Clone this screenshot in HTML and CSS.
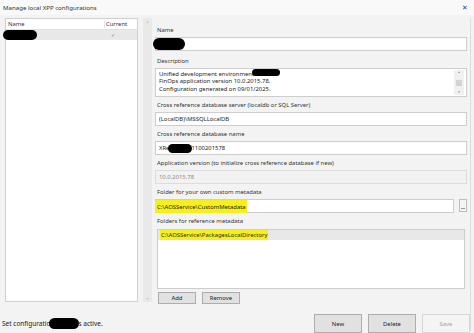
FILE: index.html
```html
<!DOCTYPE html>
<html>
<head>
<meta charset="utf-8">
<link rel="stylesheet" href="styles.css">
</head>
<body>
<div class="window">
  <header class="titlebar">
    <span class="title">Manage local XPP configurations</span>
    <span class="close">✕</span>
  </header>
  <main class="main">
    <section class="configs">
      <div class="configs-head"><span class="col-name">Name</span><span class="col-current">Current</span></div>
      <div class="configs-row selected"><span class="redact r-list"></span><span class="check">✓</span></div>
    </section>
    <div class="splitter"><span class="arrow">▲</span><span class="arrow">▼</span></div>
    <section class="form">
      <div class="lbl l-name">Name</div>
      <div class="input name-input"><span class="redact r-name"></span></div>

      <div class="lbl l-desc">Description</div>
      <div class="textarea">
        <div class="lines">
          <div>Unified development environment<span class="redact r-desc"></span></div>
          <div>FinOps application version 10.0.2015.78.</div>
          <div>Configuration generated on 09/01/2025.</div>
        </div>
        <div class="vbar"><span class="up">▲</span><span class="thumb"></span><span class="down">▼</span></div>
      </div>

      <div class="lbl">Cross reference database server (localdb or SQL Server)</div>
      <div class="input">(LocalDB)\MSSQLLocalDB</div>

      <div class="lbl">Cross reference database name</div>
      <div class="input">XRe<span class="redact r-db"></span>1100201578</div>

      <div class="lbl">Application version (to initialize cross reference database if new)</div>
      <div class="input disabled">10.0.2015.78</div>

      <div class="lbl">Folder for your own custom metadata</div>
      <div class="folder-row">
        <div class="input folder-input"><span class="hl">C:\AOSService\CustomMetadata</span></div>
        <div class="browse"><span></span></div>
      </div>

      <div class="lbl">Folders for reference metadata</div>
      <div class="reflist">
        <div class="ref-row selected"><span class="hl">C:\AOSService\PackagesLocalDirectory</span></div>
      </div>
      <div class="ref-buttons">
        <button class="btn small">Add</button>
        <button class="btn small">Remove</button>
      </div>
    </section>
    <div class="edge"></div>
  </main>
  <footer class="footer">
    <div class="status">Set configuratio<span class="redact r-status"></span>s active.</div>
    <div class="actions">
      <button class="btn">New</button>
      <button class="btn">Delete</button>
      <button class="btn disabled-btn">Save</button>
    </div>
  </footer>
</div>
</body>
</html>
```
FILE: styles.css
```css
* { box-sizing: border-box; }
html, body { margin: 0; padding: 0; }
body {
  width: 474px;
  height: 333px;
  overflow: hidden;
  background: #f3f3f3;
  font-family: "Noto Sans", "Open Sans", sans-serif;
  font-size: 5.9px;
  color: #2b2b2b;
}
.window { width: 474px; height: 333px; display: flex; flex-direction: column; }

.titlebar {
  height: 17px;
  display: flex;
  align-items: center;
  justify-content: space-between;
  padding: 0 6px 1px 3px;
  background: #f9f9f9;
}
.title { font-size: 6.1px; color: #333; }
.close { font-size: 7px; color: #444; }

.main {
  height: 287px;
  margin-top: 3px;
  display: flex;
  padding-left: 5px;
}

.configs {
  width: 133px;
  height: 284px;
  background: #fff;
  border: 1px solid #cfcfcf;
}
.configs-head {
  height: 11px;
  display: flex;
  align-items: center;
  border-bottom: 1px solid #e2e2e2;
  padding-left: 2px;
  color: #333;
}
.col-name { flex: 1; }
.col-current { width: 33px; border-left: 1px solid #e6e6e6; padding-left: 1px; }
.configs-row {
  height: 10px;
  display: flex;
  align-items: center;
  justify-content: space-between;
  position: relative;
}
.configs-row.selected { background: #e8e8e8; }
.check { width: 33px; padding-left: 7px; color: #777; font-size: 5px; }

.redact {
  display: inline-block;
  background: #000;
  border-radius: 6px;
}
.r-list { width: 34px; height: 10px; margin-left: -3px; }

.splitter {
  width: 9px;
  height: 284px;
  margin-left: 5px;
  background: #e9e9e9;
  display: flex;
  flex-direction: column;
  justify-content: space-between;
  align-items: center;
  padding: 1px 0;
}
.arrow { font-size: 3.5px; color: #c2c2c2; line-height: 5px; }

.form {
  width: 312px;
  margin-left: 3px;
  padding-top: 8px;
  display: flex;
  flex-direction: column;
}
.edge {
  width: 1px;
  margin-left: 3px;
  background: #dcdcdc;
  height: 313px;
}

.lbl {
  height: 8px;
  line-height: 8px;
  padding-left: 2px;
  margin-top: 4px;
  color: #333;
  white-space: nowrap;
}
.l-name { margin-top: 0; }
.l-desc { margin-top: 6px; }

.input {
  height: 14px;
  margin-top: 3px;
  background: #fff;
  border: 1px solid #cdcdcd;
  display: flex;
  align-items: center;
  padding-left: 3px;
  color: #1e1e1e;
  white-space: nowrap;
  position: relative;
}
.input.disabled { background: #f2f2f2; border-color: #dcdcdc; color: #8c8c8c; }
.name-input { padding-left: 0; }
.r-name { width: 32px; height: 12px; margin-left: -3px; }
.r-db { width: 24px; height: 9px; margin: 0 -1px 0 -1px; }

.textarea {
  height: 29px;
  margin-top: 3px;
  background: #fff;
  border: 1px solid #cdcdcd;
  display: flex;
}
.lines { flex: 1; padding: 2px 0 0 3px; line-height: 7.3px; color: #1e1e1e; }
.r-desc { width: 28px; height: 7px; transform: translateY(-2px); margin-left: -2px; vertical-align: middle; }
.vbar {
  width: 10px;
  margin: 1px 2px 1px 0;
  background: #f0f0f0;
  display: flex;
  flex-direction: column;
  align-items: center;
  justify-content: space-between;
}
.vbar .up, .vbar .down { font-size: 3px; color: #8a8a8a; line-height: 5px; }
.vbar .thumb { width: 6px; height: 6px; background: #d4d4d4; }

.folder-row { display: flex; align-items: flex-start; margin-top: 3px; }
.folder-input { width: 300px; margin-top: 0; padding-left: 2px; }
.hl { background: #f6ef1e; padding: 1px 1px; }
.folder-input .hl { margin-left: -3px; padding: 3px 1px 2px 2px; }
.browse {
  width: 8px;
  height: 13px;
  margin-left: 5px;
  border: 1px solid #bdbdbd;
  background: #f4f4f4;
  display: flex;
  align-items: flex-end;
  padding: 0 1px 2px;
}
.browse span { display: block; width: 100%; height: 1px; background: #9a9a9a; }

.reflist {
  width: 308px;
  height: 60px;
  margin: 4px 0 0 2px;
  background: #fff;
  border: 1px solid #cdcdcd;
}
.ref-row { height: 10px; display: flex; align-items: center; padding-left: 2px; white-space: nowrap; }
.ref-row.selected { background: #e8e8e8; }

.ref-buttons { display: flex; gap: 6px; margin: 3px 0 0 3px; }
.btn {
  font-family: inherit;
  font-size: 5.9px;
  color: #222;
  background: #e1e1e1;
  border: 1px solid #adadad;
  height: 19px;
  width: 48px;
  padding: 0;
  display: flex;
  align-items: center;
  justify-content: center;
}
.btn.small { height: 12px; width: 38px; }
.disabled-btn { background: #f4f4f4; border-color: #d6d6d6; color: #a3a3a3; }

.footer {
  flex: 1;
  display: flex;
  justify-content: space-between;
  align-items: flex-start;
  padding: 9px 4px 0 2px;
}
.status { margin-top: 4px; display: flex; align-items: center; color: #222; font-size: 6.5px; }
.r-status { width: 30px; height: 11px; margin: 0 -1px 0 -1px; }
.actions { display: flex; gap: 6px; }
```
